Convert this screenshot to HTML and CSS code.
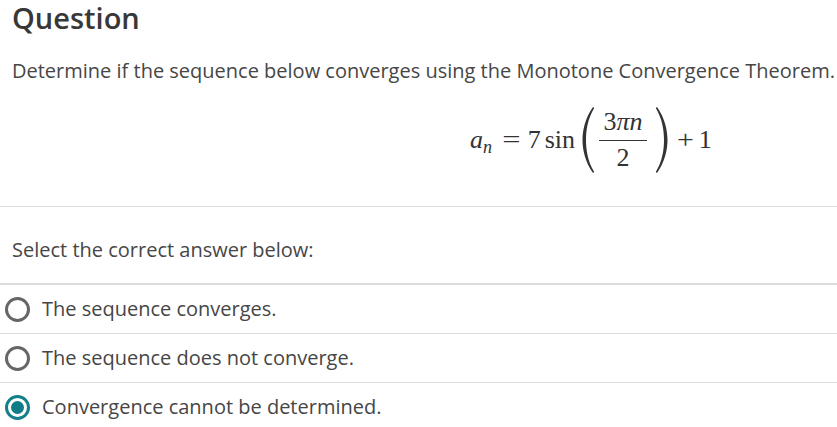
FILE: index.html
```html
<!DOCTYPE html>
<html>
<head>
<meta charset="utf-8">
<link rel="stylesheet" href="styles.css">
</head>
<body>
<div class="page">
  <h1 class="title">Question</h1>
  <p class="prompt">Determine if the sequence below converges using the Monotone Convergence Theorem.</p>
  <div class="math-row">
    <div class="math">
      <span class="mi">a</span><span class="sub">n</span>
      <span class="mo eq">=</span>
      <span class="mn">7</span><span class="fn">sin</span>
      <svg class="paren" width="14" height="68" viewBox="0 0 14 68"><path d="M12 1 C4 12 1.5 25 1.5 34 C1.5 43 4 56 12 67 L13.2 66 C6.5 55 5 43 5 34 C5 25 6.5 13 13.2 2 Z" fill="#333"/></svg>
      <span class="frac">
        <span class="num"><span class="mn">3</span><span class="mi">πn</span></span>
        <span class="bar"></span>
        <span class="den mn">2</span>
      </span>
      <svg class="paren" width="14" height="68" viewBox="0 0 14 68"><path d="M2 1 C10 12 12.5 25 12.5 34 C12.5 43 10 56 2 67 L0.8 66 C7.5 55 9 43 9 34 C9 25 7.5 13 0.8 2 Z" fill="#333"/></svg>
      <span class="mo plus">+</span><span class="mn">1</span>
    </div>
  </div>
  <div class="divider"></div>
  <p class="instruction">Select the correct answer below:</p>
  <ul class="options">
    <li class="option"><span class="radio"></span><span class="label">The sequence converges.</span></li>
    <li class="option"><span class="radio"></span><span class="label">The sequence does not converge.</span></li>
    <li class="option"><span class="radio checked"></span><span class="label">Convergence cannot be determined.</span></li>
  </ul>
</div>
</body>
</html>
```

FILE: styles.css
```css
html, body {
  margin: 0;
  padding: 0;
  background: #fff;
}
body {
  font-family: "Open Sans", "Liberation Sans", sans-serif;
  color: #464646;
  overflow: hidden;
}
.page {
  width: 837px;
}
.title {
  margin: 0;
  padding: 1px 0 0 12px;
  font-size: 29px;
  font-weight: 600;
  line-height: 34px;
  height: 33px;
  color: #383838;
}
.prompt {
  margin: 23px 0 0 0;
  padding-left: 12px;
  font-size: 20px;
  line-height: 28px;
  white-space: nowrap;
}
.math-row {
  padding: 17px 0 0 470px;
  height: 104px;
}
.math {
  display: flex;
  align-items: center;
  height: 76px;
  font-family: "Liberation Serif", "DejaVu Serif", serif;
  font-size: 26px;
  color: #333;
}
.mi {
  font-style: italic;
}
.sub {
  font-style: italic;
  font-size: 18px;
  margin-top: 14px;
}
.eq {
  margin: 0 9px 0 12px;
  transform: scaleX(1.25);
}
.fn {
  margin-left: 4px;
}
.paren {
  margin: 0 2px 0 6px;
}
.paren + .mo {
  margin-left: 7px;
}
.frac {
  display: flex;
  flex-direction: column;
  align-items: center;
  margin: 0 2px;
}
.num {
  line-height: 28px;
}
.bar {
  width: 48px;
  height: 1px;
  background: #333;
  margin: 4px 0 3px;
}
.den {
  line-height: 28px;
}
.plus {
  margin-right: 6px;
  transform: scaleX(1.15);
}
.divider {
  height: 1px;
  background: #dedede;
}
.instruction {
  margin: 0;
  padding: 29px 0 0 12px;
  height: 47px;
  font-size: 20px;
  line-height: 28px;
}
.options {
  list-style: none;
  margin: 0;
  padding: 0;
  border-top: 2px solid #dcdcdc;
}
.option {
  display: flex;
  align-items: center;
  height: 48px;
  border-bottom: 1px solid #dedede;
  font-size: 20px;
}
.radio {
  box-sizing: border-box;
  width: 25px;
  height: 25px;
  border: 3px solid #666;
  border-radius: 50%;
  margin: 0 12px 0 5px;
  display: flex;
  align-items: center;
  justify-content: center;
}
.radio.checked {
  border-color: #138089;
}
.radio.checked::after {
  content: "";
  width: 13px;
  height: 13px;
  border-radius: 50%;
  background: #0f7c87;
}
.label {
  line-height: 28px;
}
```
